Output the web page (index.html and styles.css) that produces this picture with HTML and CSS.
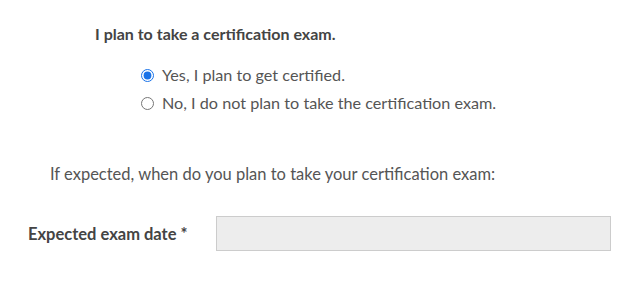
FILE: index.html
```html
<!DOCTYPE html>
<html lang="en">
<head>
    <meta charset="UTF-8">
    <meta name="viewport" content="width=device-width, initial-scale=1.0">
    <title>Certification</title>
    <link rel="stylesheet" href="styles.css">
</head>
<body>
    <div class="question">
        <h4 class="question-title">I plan to take a certification exam.</h4>
        <div class="options">
            <label class="option">
                <input type="radio" name="cert" checked>
                <span>Yes, I plan to get certified.</span>
            </label>
            <label class="option">
                <input type="radio" name="cert">
                <span>No, I do not plan to take the certification exam.</span>
            </label>
        </div>
    </div>
    <p class="hint">If expected, when do you plan to take your certification exam:</p>
    <div class="field">
        <label class="field-label" for="examDate">Expected exam date *</label>
        <input class="field-input" id="examDate" type="text">
    </div>
</body>
</html>
```

FILE: styles.css
```css
body {
    margin: 0;
    font-family: Lato, "Liberation Sans", sans-serif;
    color: #555;
    background-color: #fff;
}
.question {
    padding: 24px 0 0 95px;
}
.question-title {
    margin: 0;
    font-size: 16px;
    font-weight: bold;
    color: #444;
    line-height: 20px;
}
.options {
    margin-top: 21px;
    padding-left: 46px;
    display: flex;
    flex-direction: column;
    gap: 8px;
}
.option {
    display: flex;
    align-items: center;
    font-size: 16.2px;
    line-height: 20px;
}
.option input {
    width: 13px;
    height: 13px;
    margin: 0 8px 0 0;
    accent-color: #1a73e8;
}
.hint {
    margin: 51px 0 0 50px;
    font-size: 16.5px;
    line-height: 20px;
}
.field {
    display: flex;
    align-items: center;
    margin-top: 32px;
    padding-left: 28px;
}
.field-label {
    width: 188px;
    font-size: 16.5px;
    font-weight: bold;
    color: #444;
}
.field-input {
    width: 395px;
    height: 35px;
    box-sizing: border-box;
    margin: 0;
    border: 1px solid #ccc;
    background-color: #ededed;
}
```
